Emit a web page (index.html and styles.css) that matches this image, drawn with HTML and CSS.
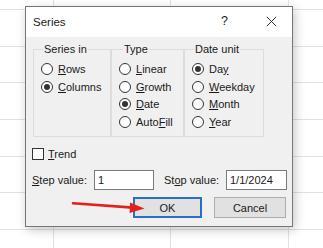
FILE: index.html
```html
<!DOCTYPE html>
<html>
<head>
<meta charset="utf-8">
<link rel="stylesheet" href="styles.css">
</head>
<body>
<div class="sheet">
  <div class="vline v1"></div><div class="vline v2"></div><div class="vline v3"></div>
  <div class="hline" style="top:9px"></div>
  <div class="hline" style="top:46px"></div>
  <div class="hline" style="top:82px"></div>
  <div class="hline" style="top:119px"></div>
  <div class="hline" style="top:156px"></div>
  <div class="hline" style="top:192px"></div>
  <div class="hline" style="top:229px"></div>
</div>

<div class="dialog">
  <div class="titlebar">
    <span class="title">Series</span>
    <span class="help">?</span>
    <svg class="close" width="11" height="11" viewBox="0 0 11 11"><path d="M0.8 0.8 L10.2 10.2 M10.2 0.8 L0.8 10.2" stroke="#333" stroke-width="1" fill="none"/></svg>
  </div>
  <div class="body">
    <div class="groups">
      <fieldset class="group g1">
        <legend>Series in</legend>
        <div class="opt"><span class="radio"></span><span><u>R</u>ows</span></div>
        <div class="opt"><span class="radio on"></span><span><u>C</u>olumns</span></div>
      </fieldset>
      <fieldset class="group g2">
        <legend>Type</legend>
        <div class="opt"><span class="radio"></span><span><u>L</u>inear</span></div>
        <div class="opt"><span class="radio"></span><span><u>G</u>rowth</span></div>
        <div class="opt"><span class="radio on"></span><span><u>D</u>ate</span></div>
        <div class="opt"><span class="radio"></span><span>Auto<u>F</u>ill</span></div>
      </fieldset>
      <fieldset class="group g3">
        <legend>Date unit</legend>
        <div class="opt"><span class="radio on"></span><span>Da<u>y</u></span></div>
        <div class="opt"><span class="radio"></span><span><u>W</u>eekday</span></div>
        <div class="opt"><span class="radio"></span><span><u>M</u>onth</span></div>
        <div class="opt"><span class="radio"></span><span><u>Y</u>ear</span></div>
      </fieldset>
    </div>
    <div class="trend"><span class="check"></span><span><u>T</u>rend</span></div>
    <div class="steps">
      <span class="lbl"><u>S</u>tep value:</span>
      <span class="input in1">1</span>
      <span class="lbl lbl2">St<u>o</u>p value:</span>
      <span class="input in2">1/1/2024</span>
    </div>
    <div class="buttons">
      <span class="btn ok">OK</span>
      <span class="btn cancel">Cancel</span>
    </div>
  </div>
</div>

<svg class="arrow" width="323" height="248" viewBox="0 0 323 248">
  <path d="M73 203.3 L133 207.6" stroke="#e3201b" stroke-width="2.6" stroke-linecap="round" fill="none"/>
  <polygon points="130,202.6 144.5,208.4 129.6,213" fill="#e3201b"/>
</svg>
</body>
</html>
```
FILE: styles.css
```css
html, body {
  margin: 0;
  padding: 0;
}
body {
  width: 323px;
  height: 248px;
  position: relative;
  overflow: hidden;
  background: #ffffff;
  font-family: "Liberation Sans", Arial, sans-serif;
  font-size: 11px;
  color: #1a1a1a;
}
.sheet {
  position: absolute;
  inset: 0;
}
.vline {
  position: absolute;
  top: 0;
  bottom: 0;
  width: 1px;
  background: #e1e1e1;
}
.v1 { left: 53px; }
.v2 { left: 170px; }
.v3 { left: 288px; }
.hline {
  position: absolute;
  left: 0;
  right: 0;
  height: 1px;
  background: #e1e1e1;
}
.dialog {
  position: absolute;
  left: 25px;
  top: 6px;
  width: 268px;
  height: 221px;
  box-sizing: border-box;
  border: 1px solid #767676;
  background: #f0f0f0;
  box-shadow: 2px 3px 10px rgba(0,0,0,0.22);
  display: flex;
  flex-direction: column;
}
.titlebar {
  height: 30px;
  background: #ffffff;
  display: flex;
  align-items: center;
  padding-left: 7px;
  font-size: 11.5px;
}
.title {
  flex: 1;
  margin-top: -1px;
}
.help {
  font-size: 12.5px;
  margin-right: 38px;
  margin-top: -2px;
}
.close {
  margin-right: 15px;
  margin-top: -2px;
}
.body {
  flex: 1;
  display: flex;
  flex-direction: column;
}
.groups {
  display: flex;
  padding-left: 7px;
  margin-top: 5px;
}
fieldset.group {
  margin: 0;
  padding: 4px 0 4px 7px;
  border: 1px solid #dcdcdc;
  box-sizing: border-box;
  height: 95px;
  min-width: 0;
}
.g1 { width: 78px; }
.g2 { width: 73px; margin-left: 10px; padding-left: 8px; }
.g3 { width: 80px; margin-left: 12px; padding-left: 6px; }
legend {
  padding: 0 1px;
  margin-left: 2px;
  line-height: 14px;
}
.g2 legend { margin-left: 4px; }
.opt {
  height: 17.7px;
  display: flex;
  align-items: center;
  white-space: nowrap;
}
.radio {
  width: 12px;
  height: 12px;
  box-sizing: border-box;
  border: 1px solid #333;
  border-radius: 50%;
  background: #fff;
  margin-right: 5px;
  flex: none;
  display: flex;
  align-items: center;
  justify-content: center;
}
.radio.on::after {
  content: "";
  width: 6px;
  height: 6px;
  border-radius: 50%;
  background: #333;
}
.trend {
  display: flex;
  align-items: center;
  height: 12px;
  margin-top: 11px;
  padding-left: 6px;
}
.check {
  width: 12px;
  height: 12px;
  box-sizing: border-box;
  border: 1px solid #333;
  background: #fff;
  margin-right: 4px;
}
.steps {
  display: flex;
  align-items: center;
  margin-top: 10px;
  padding-left: 6px;
  height: 20px;
}
.lbl {
  width: 62px;
  white-space: nowrap;
}
.lbl2 {
  margin-left: 10px;
}
.input {
  height: 20px;
  box-sizing: border-box;
  border: 1px solid #7a7a7a;
  background: #fff;
  display: flex;
  align-items: center;
  padding-left: 3px;
}
.in1 { width: 60px; }
.in2 { width: 61px; }
.buttons {
  display: flex;
  justify-content: flex-end;
  gap: 12px;
  margin-top: 7px;
  padding-right: 6px;
}
.btn {
  height: 21px;
  box-sizing: border-box;
  background: #e1e1e1;
  display: flex;
  align-items: center;
  justify-content: center;
}
.ok {
  width: 69px;
  border: 2px solid #2a6fc0;
}
.cancel {
  width: 72px;
  border: 1px solid #adadad;
}
.arrow {
  position: absolute;
  left: 0;
  top: 0;
}
```
